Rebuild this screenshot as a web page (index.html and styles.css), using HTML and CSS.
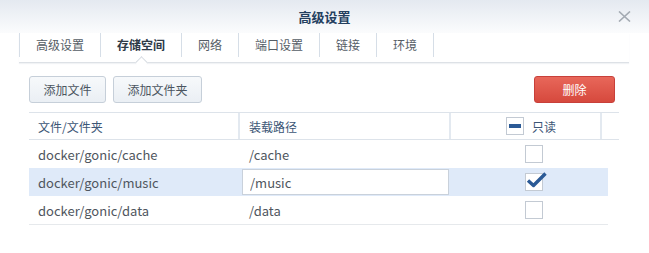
FILE: index.html
```html
<!DOCTYPE html>
<html>
<head>
    <title>高级设置</title>
    <link rel="stylesheet" href="styles.css">
</head>
<body>
    <div class="dialog">
        <div class="header">
            <span></span>
            <h2 class="title">高级设置</h2>
            <span class="close">
                <svg width="13" height="11" viewBox="0 0 13 11"><path d="M1 0.5 L12 10.5 M12 0.5 L1 10.5" stroke="#a3aab2" stroke-width="1.6" fill="none"/></svg>
            </span>
        </div>

        <div class="tabs">
            <div class="tab">高级设置</div>
            <div class="tab active">存储空间</div>
            <div class="tab">网络</div>
            <div class="tab">端口设置</div>
            <div class="tab">链接</div>
            <div class="tab last">环境</div>
        </div>

        <div class="toolbar">
            <button class="btn">添加文件</button>
            <button class="btn">添加文件夹</button>
            <span class="spacer"></span>
            <button class="btn danger">删除</button>
        </div>

        <div class="grid">
            <div class="grid-head">
                <div class="cell c1">文件/文件夹</div>
                <div class="cell c2">装载路径</div>
                <div class="cell c3">
                    <span class="check mixed"><span class="dash"></span></span>
                    <span>只读</span>
                </div>
                <div class="cell c4"></div>
            </div>
            <div class="grid-body">
                <div class="row">
                    <div class="cell c1">docker/gonic/cache</div>
                    <div class="cell c2">/cache</div>
                    <div class="cell c3"><span class="check"></span></div>
                </div>
                <div class="row selected">
                    <div class="cell c1">docker/gonic/music</div>
                    <div class="cell c2 editing"><input class="edit" type="text" value="/music"></div>
                    <div class="cell c3">
                        <span class="check checked">
                            <svg class="tick" width="22" height="18" viewBox="0 0 22 18"><path d="M2 9.5 L7.5 14.5 L19.5 2.5" stroke="#2b5a96" stroke-width="3.4" fill="none" stroke-linejoin="round"/></svg>
                        </span>
                    </div>
                </div>
                <div class="row">
                    <div class="cell c1">docker/gonic/data</div>
                    <div class="cell c2">/data</div>
                    <div class="cell c3"><span class="check"></span></div>
                </div>
            </div>
        </div>
    </div>
</body>
</html>
```

FILE: styles.css
```css
body {
    margin: 0;
    background-color: #ffffff;
    font-family: "Noto Sans CJK SC", "Noto Sans", sans-serif;
    font-size: 12px;
    color: #4f565e;
}
.dialog {
    width: 649px;
    height: 253px;
    background-color: #ffffff;
}
.header {
    height: 33px;
    display: grid;
    grid-template-columns: 1fr auto 1fr;
    align-items: center;
    background: linear-gradient(#e4e9f0, #fbfcfd);
}
.title {
    margin: 0;
    font-size: 13px;
    font-weight: bold;
    color: #24405f;
}
.close {
    justify-self: end;
    margin-right: 18px;
    display: flex;
}
.tabs {
    display: flex;
    margin: 0 20px 0 19px;
    padding-bottom: 5px;
    border-bottom: 1px solid #dde1e6;
    box-shadow: 0 1px 1px #f1f3f5;
}
.tab {
    position: relative;
    height: 24px;
    line-height: 23px;
    padding: 0 16px;
    border-left: 1px solid #d6dee7;
    color: #555d66;
}
.tab.last {
    border-right: 1px solid #d6dee7;
}
.tab.active {
    font-weight: bold;
    color: #2e3a47;
}
/* 当前页签下方的小三角 */
.tab.active::after {
    content: "";
    position: absolute;
    left: 36px;
    bottom: -10px;
    width: 8px;
    height: 8px;
    background: #ffffff;
    border-left: 1px solid #d6dbe1;
    border-top: 1px solid #d6dbe1;
    transform: rotate(45deg);
}
.toolbar {
    display: flex;
    align-items: center;
    margin: 13px 34px 0 29px;
    gap: 7px;
}
.spacer {
    flex: 1;
}
.btn {
    height: 27px;
    padding: 0 13.5px;
    font-family: "Noto Sans CJK SC", sans-serif;
    font-size: 12px;
    color: #4b5560;
    background: linear-gradient(#f7f9fb, #eaeff4);
    border: 1px solid #c6cfd9;
    border-radius: 3px;
}
.btn.danger {
    padding: 0 27.5px;
    color: #ffffff;
    background: linear-gradient(#e8675a, #d6493d);
    border-color: #c8403a;
}
.grid {
    margin: 9px 30px 0 29px;
}
.grid-head {
    display: flex;
    height: 26px;
    border-top: 1px solid #dde3ea;
    border-bottom: 1px solid #dde3ea;
    color: #3c5676;
}
.grid-head .cell {
    border-right: 2px solid #e3e9f0;
}
.cell {
    display: flex;
    align-items: center;
    box-sizing: border-box;
    padding-left: 9px;
}
.c1 {
    width: 211px;
}
.c2 {
    width: 211px;
}
.c3 {
    width: 151px;
}
.grid-head .c3 {
    padding-left: 55px;
    gap: 8px;
}
.grid-head .c4 {
    flex: 1;
    border-right: none;
}
.grid-body {
    width: 579px;
    border-bottom: 1px solid #e6e9ec;
}
.row {
    display: flex;
    height: 28px;
    font-size: 13px;
    color: #4f565e;
}
.row .c3 {
    flex: 1;
    padding-left: 74px;
}
.row.selected {
    background-color: #dfeaf9;
}
.editing {
    padding-left: 2px;
}
.edit {
    width: 207px;
    height: 26px;
    box-sizing: border-box;
    padding: 0 0 0 7px;
    border: 1px solid #c9d1db;
    font-family: "Noto Sans CJK SC", "Noto Sans", sans-serif;
    font-size: 13px;
    color: #4f565e;
    outline: none;
}
.check {
    position: relative;
    display: inline-block;
    width: 16px;
    height: 16px;
    border: 1px solid #c3cad3;
    background: #ffffff;
}
.check .dash {
    position: absolute;
    left: 2px;
    top: 6px;
    width: 12px;
    height: 4px;
    background: #2b5a96;
}
.check .tick {
    position: absolute;
    left: 0;
    top: -3px;
}
```
